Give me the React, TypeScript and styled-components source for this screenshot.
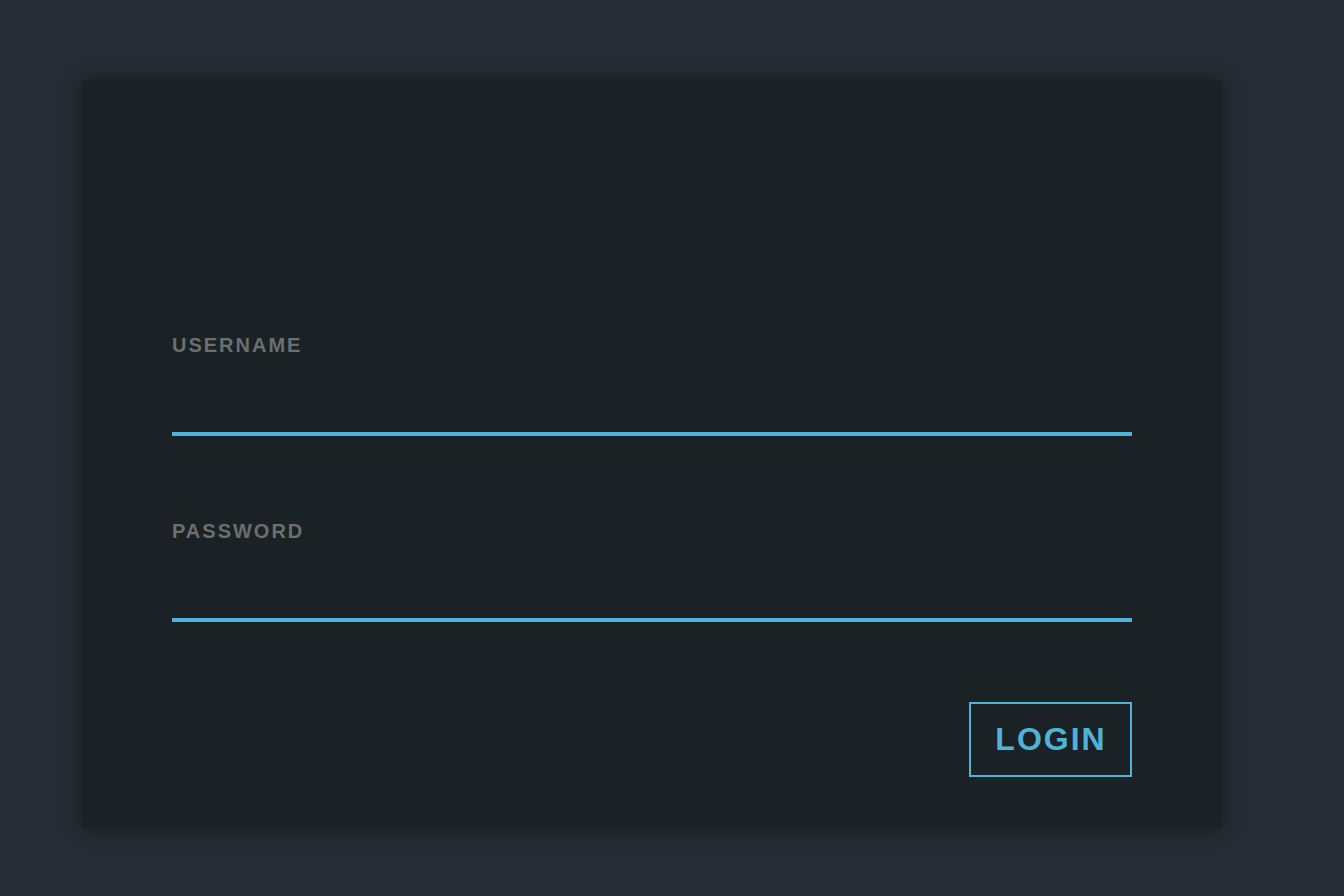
import React from 'react'
import styled, { createGlobalStyle } from 'styled-components'

const GlobalStyle = createGlobalStyle`
  html, body {
    margin: 0;
    padding: 0;
    background: #262c33;
    font-family: "Liberation Sans", Arial, Helvetica, sans-serif;
  }
  * {
    box-sizing: border-box;
  }
`

const Page = styled.div`
  min-height: 896px;
  padding: 80px 0 0 82px;
`

const Card = styled.form`
  width: 1140px;
  height: 749px;
  background: #1b2225;
  box-shadow: 0 0 18px rgba(0, 0, 0, 0.35);
  padding: 253px 90px 0;
  display: flex;
  flex-direction: column;
`

const Field = styled.label<{ $gapAfter: number }>`
  display: flex;
  flex-direction: column;
  margin-bottom: ${(p) => p.$gapAfter}px;
`

const Label = styled.span`
  font-size: 20px;
  line-height: 24px;
  font-weight: 700;
  letter-spacing: 2px;
  color: #6c6e70;
  text-transform: uppercase;
`

const Input = styled.input`
  display: block;
  width: 100%;
  height: 79px;
  padding: 0;
  background: transparent;
  border: none;
  border-bottom: 4px solid #4fb3d9;
  color: #d8dde0;
  font-family: inherit;
  font-size: 22px;
  outline: none;
`

const Actions = styled.div`
  display: flex;
  justify-content: flex-end;
`

const LoginButton = styled.button`
  width: 163px;
  height: 75px;
  background: transparent;
  border: 2px solid #4fb3d9;
  color: #4fb3d9;
  font-family: inherit;
  font-size: 32px;
  font-weight: 700;
  letter-spacing: 2px;
  padding: 0 0 0 1px;
  cursor: pointer;
`

const App = () => {
  return (
    <>
      <GlobalStyle />
      <Page>
        <Card onSubmit={(e) => e.preventDefault()}>
          <Field $gapAfter={83}>
            <Label>Username</Label>
            <Input type="text" />
          </Field>
          <Field $gapAfter={80}>
            <Label>Password</Label>
            <Input type="password" />
          </Field>
          <Actions>
            <LoginButton type="submit">LOGIN</LoginButton>
          </Actions>
        </Card>
      </Page>
    </>
  )
}

export default App
